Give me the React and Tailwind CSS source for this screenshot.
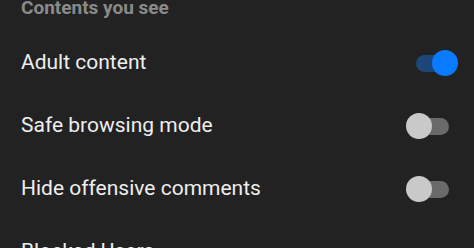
import React, { useState } from 'react';

function Toggle({ on, onChange }) {
  return (
    <button
      onClick={onChange}
      className="relative h-[26px] w-[52px] shrink-0"
    >
      <span
        className={`absolute left-[10px] top-[5px] h-[17px] w-[33px] rounded-full ${on ? 'bg-[#1d4779]' : 'bg-[#6a6a6a]'}`}
      />
      <span
        className={`absolute top-0 h-[26px] w-[26px] rounded-full ${on ? 'left-[26px] bg-[#0a7bff]' : 'left-0 bg-[#c9c9c9]'}`}
      />
    </button>
  );
}

const ROWS = [
  { key: 'adult', label: 'Adult content', on: true },
  { key: 'safe', label: 'Safe browsing mode', on: false },
  { key: 'offensive', label: 'Hide offensive comments', on: false },
];

export default function App() {
  const [state, setState] = useState(
    Object.fromEntries(ROWS.map(r => [r.key, r.on]))
  );

  return (
    <div className="h-[248px] w-[474px] overflow-hidden bg-[#222222] font-['Roboto',sans-serif]">
      <h2 className="mt-[-4px] px-[21px] text-[19px] font-bold leading-[24px] text-[#8a8a8a]">
        Contents you see
      </h2>
      <div className="mt-[11px]">
        {ROWS.map(r => (
          <div key={r.key} className="flex h-[63px] items-center justify-between pl-[21px] pr-[16px]">
            <span className="text-[21px] text-[#eeeeee]">{r.label}</span>
            <Toggle on={state[r.key]} onChange={() => setState(s => ({ ...s, [r.key]: !s[r.key] }))} />
          </div>
        ))}
        <div className="flex h-[63px] items-center pl-[21px]">
          <span className="text-[21px] text-[#eeeeee]">Blocked Users</span>
        </div>
      </div>
    </div>
  );
}
